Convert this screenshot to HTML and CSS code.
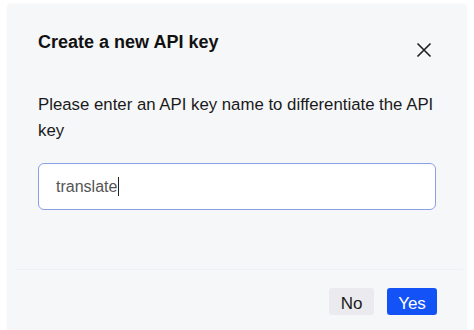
FILE: index.html
```html
<!DOCTYPE html>
<html lang="en">
<head>
<meta charset="utf-8">
<link rel="stylesheet" href="styles.css">
<title>Create API key</title>
</head>
<body>
<div class="dialog">
  <div class="header">
    <h2 class="title">Create a new API key</h2>
    <button class="close" aria-label="Close">
      <svg width="16" height="16" viewBox="0 0 16 16"><path d="M1.5 1.5 L14.5 14.5 M14.5 1.5 L1.5 14.5" stroke="#1f1f1f" stroke-width="1.6" fill="none"/></svg>
    </button>
  </div>
  <div class="body">
    <p class="desc">Please enter an API key name to differentiate the API key</p>
    <div class="input"><span class="value">translate</span><span class="caret"></span></div>
  </div>
  <div class="footer">
    <button class="btn btn-no">No</button>
    <button class="btn btn-yes">Yes</button>
  </div>
</div>
</body>
</html>
```
FILE: styles.css
```css
* { box-sizing: border-box; }
html, body { margin: 0; padding: 0; background: #ffffff; }
body {
  font-family: "Liberation Sans", Arial, sans-serif;
  padding: 4px 7px 0 7px;
  height: 330px;
  overflow: hidden;
}
.dialog {
  background: #f6f7f9;
  height: 340px;
  border-radius: 4px;
  box-shadow: 0 0 3px rgba(0,0,0,0.04);
}
.header {
  display: flex;
  justify-content: space-between;
  align-items: flex-start;
  padding: 28px 35px 0 31px;
}
.title {
  margin: 0;
  font-size: 18px;
  font-weight: bold;
  color: #111;
  line-height: 21px;
}
.close {
  border: 0;
  background: none;
  padding: 0;
  margin-top: 10px;
  width: 16px;
  height: 16px;
  display: flex;
}
.body {
  padding: 0 31px;
}
.desc {
  margin: 34px 0 0 0;
  font-size: 16.8px;
  line-height: 26px;
  color: #1a1a1a;
}
.input {
  margin-top: 19px;
  height: 47px;
  background: #fff;
  border: 1px solid #8b9fe4;
  border-radius: 6px;
  display: flex;
  align-items: center;
  padding-left: 17px;
  font-size: 16px;
  color: #555;
}
.caret {
  display: inline-block;
  width: 1px;
  height: 19px;
  background: #222;
  margin-left: 1px;
}
.footer {
  margin-top: 59px;
  border-top: 1px solid #eef0f3;
  margin-left: 9px;
  margin-right: 4px;
  display: flex;
  justify-content: flex-end;
  gap: 13px;
  padding: 18px 26px 0 0;
}
.btn {
  font-family: "Liberation Sans", Arial, sans-serif;
  font-size: 17px;
  border: 0;
  border-radius: 3px;
  height: 27px;
  padding: 5px 0 0 0;
}
.btn-no {
  width: 45px;
  background: #ebebef;
  color: #1a1a1a;
}
.btn-yes {
  width: 50px;
  background: #1352f7;
  color: #fff;
}
```
